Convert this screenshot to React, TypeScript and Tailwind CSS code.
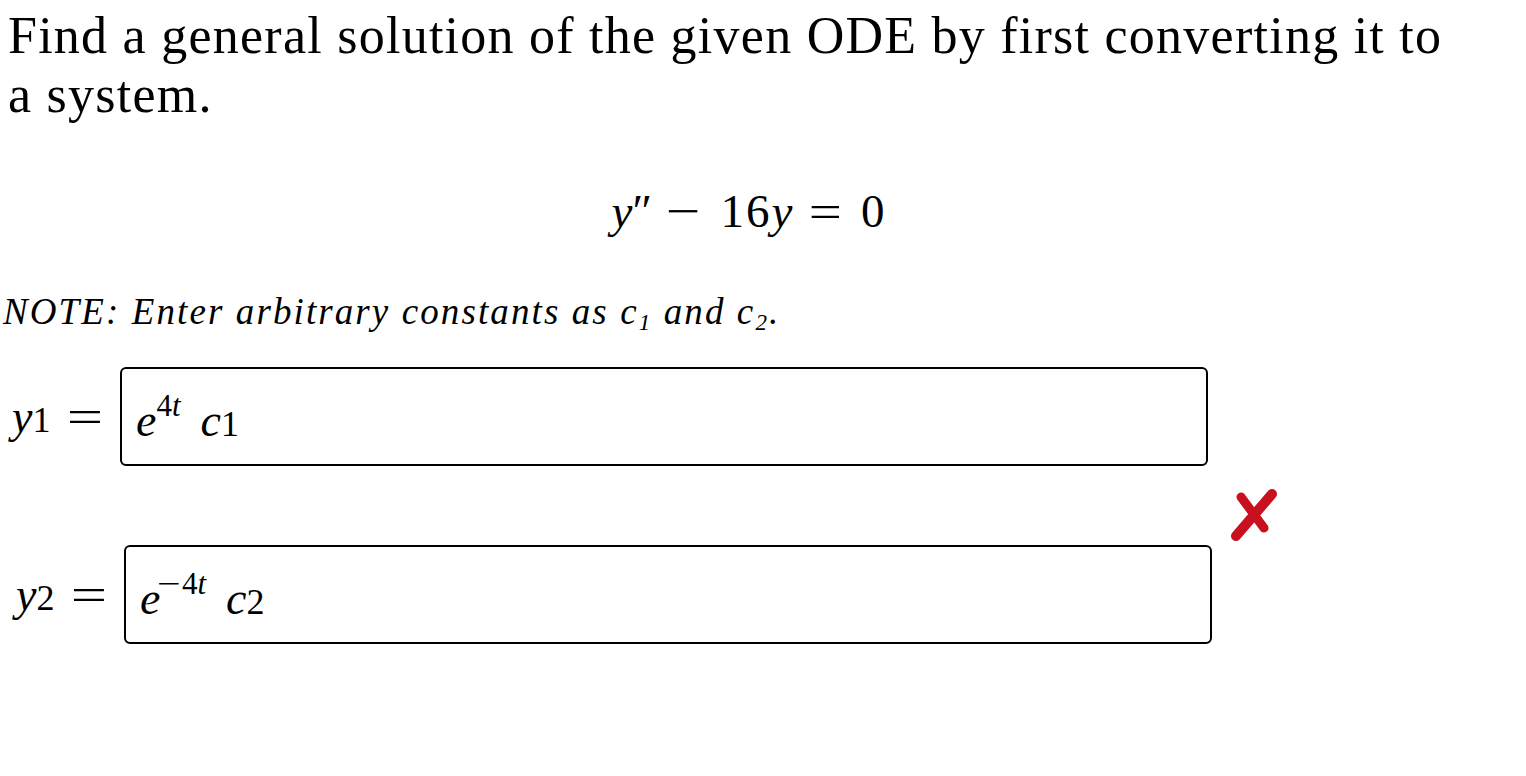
import React from 'react';

const serif = { fontFamily: '"Liberation Serif", "DejaVu Serif", serif' };

const WrongMark: React.FC = () => (
  <svg width="46" height="52" viewBox="0 0 46 52" className="block">
    <path d="M5 47 L41 5" stroke="#c8101e" strokeWidth="10" strokeLinecap="round" fill="none" />
    <path d="M10 8 L33 39" stroke="#c8101e" strokeWidth="9" strokeLinecap="round" fill="none" />
  </svg>
);

const AnswerRow: React.FC<{ idx: string; neg?: boolean; labelW: string }> = ({ idx, neg, labelW }) => (
  <div className="flex items-center">
    <div className={`${labelW} text-[46px] leading-none whitespace-nowrap pl-[2px]`}>
      <i>y</i>
      <span className="text-[36px]">{idx}</span>
      <span className="inline-block ml-[22px] scale-x-[1.4]">=</span>
    </div>
    <div className="w-[1088px] h-[99px] border-2 border-black rounded-[6px] flex items-center pl-[14px]">
      <span className="text-[46px] leading-none whitespace-nowrap pt-[8px]">
        <i>e</i>
        <sup className="text-[31px] -top-[20px]">
          {neg && <span className="inline-block mr-[4px] scale-x-[1.35]">−</span>}4<i>t</i>
        </sup>
        <i className="ml-[20px]">c</i>
        <span className="text-[36px]">{idx}</span>
      </span>
    </div>
  </div>
);

export default function App() {
  return (
    <div className="w-[1526px] h-[776px] bg-white text-black overflow-hidden" style={serif}>
      <p className="pl-[8px] pt-[6px] text-[52px] leading-[59px] tracking-[1.25px]">
        Find a general solution of the given ODE by first converting it to
        <br />a system.
      </p>

      <div className="mt-[64px] flex justify-center pr-[30px] text-[47px] leading-none">
        <span className="whitespace-nowrap">
          <i>y</i>″<span className="inline-block ml-[18px] mr-[24px] scale-x-[1.3]">−</span>
          <span className="tracking-[2px]">16</span>
          <i>y</i>
          <span className="inline-block ml-[20px] mr-[22px] scale-x-[1.25]">=</span>0
        </span>
      </div>

      <p className="mt-[58px] pl-[3px] text-[37px] italic leading-none tracking-[2.1px]">
        NOTE: Enter arbitrary constants as c<sub className="text-[23px]">1</sub> and c
        <sub className="text-[23px]">2</sub>.
      </p>

      <div className="mt-[37px] pl-[10px]">
        <AnswerRow idx="1" labelW="w-[110px]" />
        <div className="h-[79px] flex items-center pl-[1221px] pt-[18px]">
          <WrongMark />
        </div>
        <AnswerRow idx="2" neg labelW="w-[114px] pl-[6px]" />
      </div>
    </div>
  );
}
